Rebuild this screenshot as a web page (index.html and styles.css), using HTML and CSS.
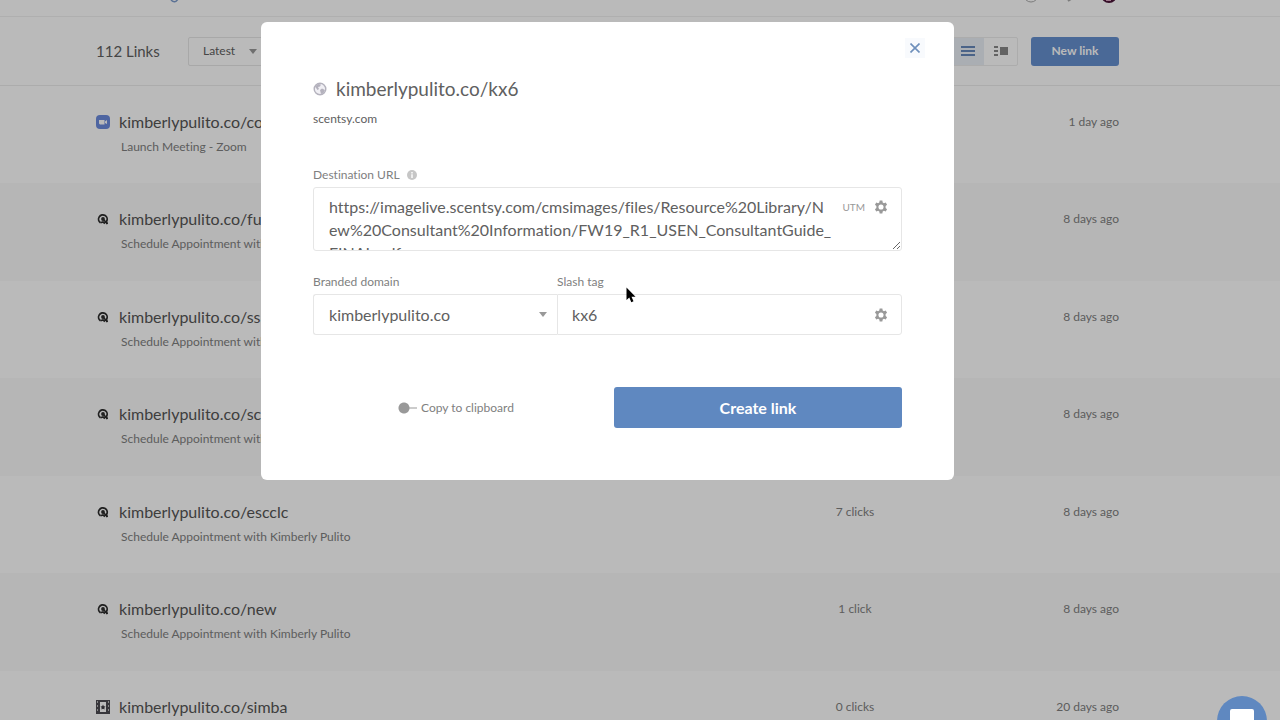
FILE: index.html
```html
<!DOCTYPE html>
<html lang="en">
<head>
    <meta charset="UTF-8">
    <meta name="viewport" content="width=device-width, initial-scale=1.0">
    <title>Links</title>
    <link rel="stylesheet" href="styles.css">
</head>
<body>
    <!-- Shared icons -->
    <svg class="sprite" aria-hidden="true">
        <symbol id="icon-gear" viewBox="0 0 24 24">
            <path fill="currentColor" fill-rule="evenodd" d="M9.700 1h4.600l.600 3.200 2.100 1.200 3.100-1.100 2.300 4-2.500 2.100v3.200l2.500 2.100-2.300 4-3.100-1.100-2.100 1.200-.600 3.200H9.700l-.600-3.200L7 18.600l-3.100 1.100-2.300-4 2.500-2.100v-3.200L1.600 8.300l2.300-4L7 5.400l2.100-1.200zM12 7.600a4.400 4.400 0 1 0 0 8.800 4.400 4.400 0 0 0 0-8.800z"/>
        </symbol>
        <symbol id="icon-acuity" viewBox="0 0 14 14">
            <path fill="none" stroke="#2c2c2c" stroke-width="1.800" d="M4.500 10.800A4.300 4.300 0 1 1 10.500 9.500L11 12"/>
            <circle cx="7" cy="7" r="1.900" fill="#2c2c2c"/>
            <path fill="none" stroke="#2c2c2c" stroke-width="1.600" d="M7.500 7.500l4 4.500M4.500 10.800l2.500-.800 2 1.500"/>
        </symbol>
    </svg>

    <div class="page">
        <nav class="topbar">
            <div class="container topbar-inner">
                <svg class="topbar-logo" width="10" height="3" viewBox="0 0 10 3"><path d="M1 0q4 4 7-1" fill="none" stroke="#7d9ccc" stroke-width="1.500"/></svg>
                <svg class="topbar-tools" width="96" height="4" viewBox="0 0 96 4">
                    <circle cx="8" cy="-5" r="7" fill="none" stroke="#aaa" stroke-width="1"/>
                    <path d="M45 1l3-2" stroke="#aaa" stroke-width="2"/>
                    <circle cx="86" cy="-5" r="8" fill="#4a1438"/>
                    <path d="M83 0h5" stroke="#d9a3bf" stroke-width="2"/>
                </svg>
            </div>
        </nav>

        <header class="toolbar">
            <div class="container toolbar-inner">
                <h1 class="count">112 Links</h1>
                <div class="picker sort">
                    <select aria-label="Sort links"><option>Latest</option></select>
                    <svg class="caret" width="8" height="5" viewBox="0 0 8 5"><path d="M0 0h8L4 5z" fill="currentColor"/></svg>
                </div>
                <div class="views">
                    <button class="view active" type="button" aria-label="List view">
                        <svg width="14" height="10" viewBox="0 0 14 10"><path d="M0 1h14M0 5h14M0 9h14" stroke="#6688bb" stroke-width="2"/></svg>
                    </button>
                    <button class="view" type="button" aria-label="Detail view">
                        <svg width="14" height="10" viewBox="0 0 14 10"><path d="M0 1h4M0 5h4M0 9h4" stroke="#888" stroke-width="2"/><path d="M6 1h8v8H6z" fill="#888"/></svg>
                    </button>
                </div>
                <button class="btn btn-new" type="button">New link</button>
            </div>
        </header>

        <main class="links">
            <article class="row">
                <div class="container row-inner">
                    <div class="link">
                        <svg class="favicon" viewBox="0 0 14 14"><rect width="14" height="14" rx="4" fill="#6b8bdd"/><path d="M3 5h5.500v4.500H4L3 8.500zM9 6.500l2-1.500v4L9 8z" fill="#fff"/></svg>
                        <a class="link-title" href="#">kimberlypulito.co/connect</a>
                        <p class="link-note">Launch Meeting - Zoom</p>
                    </div>
                    <span class="clicks">12 clicks</span>
                    <time class="date">1 day ago</time>
                </div>
            </article>
            <article class="row">
                <div class="container row-inner">
                    <div class="link">
                        <svg class="favicon"><use href="#icon-acuity"/></svg>
                        <a class="link-title" href="#">kimberlypulito.co/future</a>
                        <p class="link-note">Schedule Appointment with Kimberly Pulito</p>
                    </div>
                    <span class="clicks">0 clicks</span>
                    <time class="date">8 days ago</time>
                </div>
            </article>
            <article class="row">
                <div class="container row-inner">
                    <div class="link">
                        <svg class="favicon"><use href="#icon-acuity"/></svg>
                        <a class="link-title" href="#">kimberlypulito.co/ss</a>
                        <p class="link-note">Schedule Appointment with Kimberly Pulito</p>
                    </div>
                    <span class="clicks">0 clicks</span>
                    <time class="date">8 days ago</time>
                </div>
            </article>
            <article class="row">
                <div class="container row-inner">
                    <div class="link">
                        <svg class="favicon"><use href="#icon-acuity"/></svg>
                        <a class="link-title" href="#">kimberlypulito.co/sc</a>
                        <p class="link-note">Schedule Appointment with Kimberly Pulito</p>
                    </div>
                    <span class="clicks">0 clicks</span>
                    <time class="date">8 days ago</time>
                </div>
            </article>
            <article class="row">
                <div class="container row-inner">
                    <div class="link">
                        <svg class="favicon"><use href="#icon-acuity"/></svg>
                        <a class="link-title" href="#">kimberlypulito.co/escclc</a>
                        <p class="link-note">Schedule Appointment with Kimberly Pulito</p>
                    </div>
                    <span class="clicks">7 clicks</span>
                    <time class="date">8 days ago</time>
                </div>
            </article>
            <article class="row">
                <div class="container row-inner">
                    <div class="link">
                        <svg class="favicon"><use href="#icon-acuity"/></svg>
                        <a class="link-title" href="#">kimberlypulito.co/new</a>
                        <p class="link-note">Schedule Appointment with Kimberly Pulito</p>
                    </div>
                    <span class="clicks">1 click</span>
                    <time class="date">8 days ago</time>
                </div>
            </article>
            <article class="row">
                <div class="container row-inner">
                    <div class="link">
                        <svg class="favicon" viewBox="0 0 14 14"><path d="M0 0h14v14H0z" fill="#4c4a52"/><path d="M4 2h6v10H4z" fill="#fff"/><path d="M1 1h1v2H1zM1 5h1v2H1zM1 9h1v2H1zM12 1h1v2h-1zM12 5h1v2h-1zM12 9h1v2h-1z" fill="#bbb"/><path d="M7 4.500l.800 1.700 1.700.300-1.200 1.200.300 1.800L7 8.700l-1.600.800.300-1.800-1.200-1.200 1.700-.300z" fill="#3c3a42"/></svg>
                        <a class="link-title" href="#">kimberlypulito.co/simba</a>
                    </div>
                    <span class="clicks">0 clicks</span>
                    <time class="date">20 days ago</time>
                </div>
            </article>
        </main>
    </div>

    <div class="overlay">
        <form class="modal" role="dialog" aria-labelledby="modalTitle">
            <button class="close" type="button" aria-label="Close">
                <svg width="10" height="10" viewBox="0 0 10 10"><path d="M0.500 0.500l9 9M9.500 0.500l-9 9" stroke="#6e8fbb" stroke-width="1.600"/></svg>
            </button>

            <div class="modal-head">
                <svg width="14" height="14" viewBox="0 0 14 14"><circle cx="7" cy="7" r="5.800" fill="#f0eff4" stroke="#b4b2bd" stroke-width="1.400"/><path d="M2 4.500l3-2.500 3 .500-1 2-2 .500 1 2-1.500 1zM7 8l2-1.500L12 8l-1.500 3-2.500 1z" fill="#b4b2bd"/></svg>
                <h2 id="modalTitle">kimberlypulito.co/kx6</h2>
            </div>
            <p class="modal-site">scentsy.com</p>

            <div class="label-line">
                <label for="destination">Destination URL</label>
                <svg width="10" height="10" viewBox="0 0 10 10"><circle cx="5" cy="5" r="5" fill="#c6c6c6"/><path d="M5 2v1.400M5 4.200V8" stroke="#fff" stroke-width="1.400"/></svg>
            </div>
            <div class="destination">
                <textarea id="destination" spellcheck="false">https://imagelive.scentsy.com/cmsimages/files/Resource%20Library/N
ew%20Consultant%20Information/FW19_R1_USEN_ConsultantGuide_
FINAL.pdf</textarea>
                <div class="destination-tools">
                    <button class="utm" type="button">UTM</button>
                    <button class="gear" type="button" aria-label="Destination settings"><svg width="14" height="14"><use href="#icon-gear"/></svg></button>
                </div>
            </div>

            <div class="address">
                <label for="domain">Branded domain</label>
                <label for="slashtag">Slash tag</label>
                <div class="picker domain">
                    <select id="domain"><option>kimberlypulito.co</option></select>
                    <svg class="caret" width="8" height="5" viewBox="0 0 8 5"><path d="M0 0h8L4 5z" fill="currentColor"/></svg>
                </div>
                <div class="slashtag">
                    <input type="text" id="slashtag" value="kx6">
                    <button class="gear" type="button" aria-label="Slash tag settings"><svg width="14" height="14"><use href="#icon-gear"/></svg></button>
                </div>
            </div>

            <div class="actions">
                <label class="copy"><input type="checkbox" role="switch"> Copy to clipboard</label>
                <button class="btn btn-create" type="submit">Create link</button>
            </div>
        </form>
    </div>

    <button class="chat" type="button" aria-label="Open chat">
        <svg width="24" height="24" viewBox="0 0 24 24"><path d="M2 0h20a2 2 0 0 1 2 2v22l-6-4H2a2 2 0 0 1-2-2V2a2 2 0 0 1 2-2z" fill="#fff"/></svg>
    </button>

    <svg class="pointer" width="10" height="16" viewBox="0 0 10 16"><path d="M.500.500v12.500l2.800-2.500 2 4.700 2.200-1-2-4.500h4z" fill="#000"/></svg>
</body>
</html>
```
FILE: styles.css
```css
* {
    box-sizing: border-box;
}

body {
    margin: 0;
    height: 100vh;
    overflow: hidden;
    font-family: Lato, "Liberation Sans", sans-serif;
    font-size: 12px;
    font-variant-ligatures: none;
    line-height: 16px;
    color: #606060;
    background-color: #fff;
}

h1, h2, p {
    margin: 0;
    font-weight: normal;
}

button, input, select, textarea {
    font: inherit;
    color: inherit;
}

button {
    padding: 0;
    border: none;
    background: none;
    cursor: pointer;
}

svg {
    display: block;
}

.sprite {
    position: absolute;
    width: 0;
    height: 0;
}

.page {
    height: 100%;
    overflow: hidden;
}

.container {
    max-width: 1023px;
    margin: 0 auto;
}

.topbar, .toolbar, .row, .overlay {
    padding-right: 65px;
}

.topbar {
    height: 17px;
    border-bottom: 1px solid #f0f0f0;
}

.topbar-inner {
    display: flex;
    justify-content: space-between;
}

.topbar-logo {
    margin-left: 74px;
}

.toolbar {
    border-bottom: 1px solid #ececec;
}

.toolbar-inner {
    display: flex;
    align-items: center;
    height: 68px;
}

.count {
    width: 92px;
    font-size: 15px;
    line-height: 24px;
}

/* Select boxes with their own arrow */
.picker {
    display: grid;
    align-items: center;
}

.picker select {
    grid-area: 1 / 1;
    width: 100%;
    height: 100%;
    padding: 0 15px;
    border: none;
    background: none;
    appearance: none;
}

.picker .caret {
    grid-area: 1 / 1;
    justify-self: end;
    margin-right: 10px;
    color: #999;
    pointer-events: none;
}

.sort {
    width: 80px;
    height: 29px;
    border: 1px solid #e6e6e6;
    border-radius: 2px;
}

.sort select {
    padding: 0 14px;
}

.views {
    display: flex;
    margin-left: auto;
    margin-right: 13px;
    border: 1px solid #ececec;
    border-radius: 2px;
}

.view {
    display: flex;
    align-items: center;
    justify-content: center;
    width: 33px;
    height: 27px;
}

.view.active {
    background-color: #e9eff6;
}

.btn {
    border-radius: 3px;
    font-weight: bold;
    color: #fff;
    background-color: #5f88c0;
}

.btn-new {
    width: 88px;
    height: 29px;
    background-color: #6690d0;
}

.row:nth-child(even) {
    border-bottom: 1px solid #fafafa;
    background-color: #fafafa;
}

.row-inner {
    display: grid;
    grid-template-columns: 1fr 120px 204px;
    height: 97px;
    padding-top: 24px;
    line-height: 24px;
    color: #808080;
}

.link {
    display: grid;
    grid-template-columns: 14px 1fr;
    grid-auto-rows: max-content;
    column-gap: 9px;
    row-gap: 5px;
    align-items: center;
}

.favicon {
    width: 14px;
    height: 14px;
}

.link-title {
    font-size: 16px;
    color: #555;
    text-decoration: none;
}

.link-note {
    grid-column: 2;
    padding-left: 2px;
    line-height: 16px;
}

.clicks {
    text-align: center;
}

.date {
    text-align: right;
}

.overlay {
    position: fixed;
    inset: 0;
    padding-top: 22px;
    background-color: rgba(0, 0, 0, 0.27);
}

.modal {
    position: relative;
    max-width: 693px;
    margin: 0 auto;
    padding: 54px 52px 52px;
    border-radius: 6px;
    background-color: #fff;
}

.close {
    position: absolute;
    top: 16px;
    right: 29px;
    display: grid;
    place-items: center;
    width: 20px;
    height: 20px;
    background-color: #f8fafd;
}

.modal-head {
    display: flex;
    align-items: center;
    gap: 9px;
}

.modal-head h2 {
    font-size: 19px;
    line-height: 26px;
}

.modal-site {
    margin-top: 9px;
}

label {
    color: #808080;
}

.label-line {
    display: flex;
    align-items: center;
    gap: 7px;
    margin: 40px 0 4px;
}

/* The tools sit over the right end of the text box */
.destination {
    position: relative;
}

.destination textarea {
    display: block;
    width: 100%;
    height: 64px;
    padding: 7px 64px 0 15px;
    border: 1px solid #e6e6e6;
    border-radius: 3px;
    outline: none;
    overflow: hidden;
    resize: vertical;
    font-size: 16px;
    line-height: 23px;
    word-break: break-all;
    background: none;
}

.destination-tools {
    position: absolute;
    top: 13px;
    right: 14px;
    display: flex;
    align-items: center;
    gap: 9px;
}

.utm {
    font-size: 10px;
    line-height: 14px;
    color: #999;
}

.gear {
    color: #999;
}

.address {
    display: grid;
    grid-template-columns: 244px 1fr;
    row-gap: 4px;
    margin-top: 23px;
}

.domain, .slashtag {
    height: 41px;
    border: 1px solid #e6e6e6;
    font-size: 16px;
}

.domain {
    border-right: none;
    border-radius: 3px 0 0 3px;
}

.slashtag {
    display: flex;
    align-items: center;
    padding: 0 13px 0 14px;
    border-radius: 0 3px 3px 0;
}

.slashtag input {
    flex: 1;
    min-width: 0;
    padding: 0;
    border: none;
    outline: none;
}

.actions {
    display: flex;
    align-items: center;
    justify-content: space-between;
    margin-top: 52px;
    padding-left: 85px;
}

.copy {
    display: flex;
    align-items: center;
    gap: 4px;
}

/* Switch in its off state: a knob with a short track */
.copy input {
    width: 19px;
    height: 12px;
    margin: 0;
    appearance: none;
    background:
        radial-gradient(circle at 6px 6px, #999 5px, transparent 6px),
        linear-gradient(#ccc, #ccc) right center / 9px 2px no-repeat;
}

.btn-create {
    width: 288px;
    height: 41px;
    font-size: 16px;
}

.chat {
    position: fixed;
    right: 13px;
    bottom: -26px;
    display: grid;
    place-items: center;
    width: 50px;
    height: 50px;
    border-radius: 50%;
    background-color: #5f88c0;
}

.pointer {
    position: absolute;
    top: 287px;
    left: 626px;
}
```
